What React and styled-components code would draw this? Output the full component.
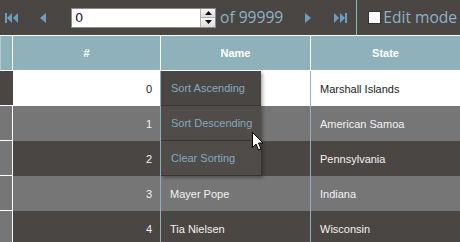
import React from "react";
import styled, { createGlobalStyle } from "styled-components";

const Global = createGlobalStyle`
  html, body { margin: 0; padding: 0; background: #ffffff; overflow: hidden; }
  * { box-sizing: border-box; }
`;

const Page = styled.div`
  position: relative;
  width: 460px;
  height: 242px;
  overflow: hidden;
  background: #4a4644;
  font-family: "Liberation Sans", Arial, sans-serif;
`;

const Toolbar = styled.div`
  display: flex;
  align-items: center;
  height: 36px;
  background: #4a4644;
  border-bottom: 1px solid #ffffff;
  white-space: nowrap;
  & > * { flex-shrink: 0; }
`;

const NavButton = styled.div`
  display: flex;
  align-items: center;
  justify-content: center;
  width: ${(p) => p.$w}px;
  margin-left: ${(p) => p.$ml || 0}px;
  height: 35px;
  color: #6f9dbd;
`;

const PageInput = styled.div`
  position: relative;
  display: flex;
  align-items: center;
  width: 145px;
  height: 20px;
  margin-left: ${(p) => p.$ml}px;
  background: #ffffff;
  border: 1px solid #8a8a8a;
  padding-left: 3px;
  font-family: "DejaVu Sans", Tahoma, sans-serif;
  font-size: 13px;
  color: #1a1a40;
`;

const Spinner = styled.div`
  position: absolute;
  right: 0;
  top: 0;
  bottom: 0;
  width: 15px;
  display: flex;
  flex-direction: column;
  border-left: 1px solid #b0b0b0;
  background: #ececec;
`;

const SpinBtn = styled.div`
  flex: 1;
  display: flex;
  align-items: center;
  justify-content: center;
  border-bottom: ${(p) => (p.$top ? "1px solid #b0b0b0" : "none")};
  background: linear-gradient(#f6f6f6, #dcdcdc);
`;

const ToolText = styled.span`
  font-family: "Open Sans", sans-serif;
  font-size: 15.6px;
  color: #8fb2c2;
  margin-left: ${(p) => p.$ml || 0}px;
  line-height: 1;
  white-space: nowrap;
`;

const Divider = styled.div`
  width: 1px;
  height: 35px;
  margin-left: ${(p) => p.$ml}px;
  background: #8fb1b9;
`;

const Check = styled.div`
  width: 13px;
  height: 13px;
  margin-left: ${(p) => p.$ml}px;
  background: #ffffff;
  border: 1px solid #333;
`;

const Grid = styled.div`
  display: grid;
  grid-template-columns: 13px 148px 150px 149px;
`;

const HeadCell = styled.div`
  height: 35px;
  display: flex;
  align-items: center;
  justify-content: center;
  background: #8fb1b9;
  border-bottom: 1px solid #ffffff;
  border-right: ${(p) => (p.$last ? "none" : "1px solid #ffffff")};
  border-left: ${(p) => (p.$first ? "1px solid #b9c9cc" : "none")};
  color: #ffffff;
  font-weight: bold;
  font-size: 11px;
`;

const Indicator = styled.div`
  height: 35px;
  background: ${(p) => p.$bg};
  border-right: ${(p) => (p.$sel ? "none" : "1px solid #ffffff")};
  border-bottom: 1px solid #ffffff;
`;

const Cell = styled.div`
  height: 35px;
  display: flex;
  align-items: center;
  justify-content: ${(p) => (p.$right ? "flex-end" : "flex-start")};
  padding: ${(p) => (p.$right ? "0 8px 0 0" : "0 0 0 9px")};
  background: ${(p) => p.$bg};
  color: ${(p) => p.$fg};
  border-right: ${(p) => (p.$last ? "none" : "1px solid #8fb1b9")};
  font-size: 11px;
  white-space: nowrap;
  overflow: hidden;
`;

const Menu = styled.div`
  position: absolute;
  left: 161px;
  top: 71px;
  width: 100px;
  background: #4a4644;
  box-shadow: 2px 2px 3px rgba(0, 0, 0, 0.3);
`;

const MenuItem = styled.div`
  height: 35px;
  display: flex;
  align-items: center;
  padding-left: 10px;
  background: ${(p) => (p.$hover ? "#4f4c4a" : "#4a4644")};
  border-bottom: 1px solid #383534;
  color: #88a8bd;
  font-size: 11px;
  white-space: nowrap;
`;

const Cursor = styled.svg`
  position: absolute;
  left: 252px;
  top: 132px;
`;

const rows = [
  { n: 0, name: "", state: "Marshall Islands" },
  { n: 1, name: "", state: "American Samoa" },
  { n: 2, name: "", state: "Pennsylvania" },
  { n: 3, name: "Mayer Pope", state: "Indiana" },
  { n: 4, name: "Tia Nielsen", state: "Wisconsin" },
];

const Tri = ({ dir }) => (
  <svg width="6" height="10" viewBox="0 0 6 10">
    {dir === "l" ? <path d="M6 0 L0 5 L6 10 Z" fill="currentColor" /> : <path d="M0 0 L6 5 L0 10 Z" fill="currentColor" />}
  </svg>
);

const First = () => (
  <svg width="13" height="10" viewBox="0 0 13 10">
    <rect x="0" y="0" width="2" height="10" fill="currentColor" />
    <path d="M7 0 L2 5 L7 10 Z" fill="currentColor" />
    <path d="M13 0 L8 5 L13 10 Z" fill="currentColor" />
  </svg>
);

const Last = () => (
  <svg width="13" height="10" viewBox="0 0 13 10">
    <path d="M0 0 L5 5 L0 10 Z" fill="currentColor" />
    <path d="M6 0 L11 5 L6 10 Z" fill="currentColor" />
    <rect x="11" y="0" width="2" height="10" fill="currentColor" />
  </svg>
);

export default function App() {
  return (
    <>
      <Global />
      <Page>
        <Toolbar>
          <NavButton $w={13} $ml={5}><First /></NavButton>
          <NavButton $w={6} $ml={22}><Tri dir="l" /></NavButton>
          <PageInput $ml={25}>
            0
            <Spinner>
              <SpinBtn $top>
                <svg width="7" height="4" viewBox="0 0 7 4"><path d="M0 4 L3.5 0 L7 4 Z" fill="#111" /></svg>
              </SpinBtn>
              <SpinBtn>
                <svg width="7" height="4" viewBox="0 0 7 4"><path d="M0 0 L3.5 4 L7 0 Z" fill="#111" /></svg>
              </SpinBtn>
            </Spinner>
          </PageInput>
          <ToolText $ml={4}>of 99999</ToolText>
          <NavButton $w={6} $ml={22}><Tri dir="r" /></NavButton>
          <NavButton $w={13} $ml={23}><Last /></NavButton>
          <Divider $ml={9} />
          <Check $ml={11} />
          <ToolText $ml={2}>Edit mode</ToolText>
        </Toolbar>
        <Grid>
          <HeadCell $first />
          <HeadCell>#</HeadCell>
          <HeadCell>Name</HeadCell>
          <HeadCell $last>State</HeadCell>
          {rows.map((r, i) => {
            const sel = i === 0;
            const bg = sel ? "#ffffff" : i % 2 === 1 ? "#767676" : "#4a4644";
            const fg = sel ? "#222222" : "#f2f2f2";
            return (
              <React.Fragment key={r.n}>
                <Indicator $bg={sel ? "#4a4644" : "#767676"} $sel={sel} />
                <Cell $right $bg={bg} $fg={fg}>{r.n}</Cell>
                <Cell $bg={bg} $fg={fg}>{r.name}</Cell>
                <Cell $last $bg={bg} $fg={fg}>{r.state}</Cell>
              </React.Fragment>
            );
          })}
        </Grid>
        <Menu>
          <MenuItem>Sort Ascending</MenuItem>
          <MenuItem $hover>Sort Descending</MenuItem>
          <MenuItem $hover>Clear Sorting</MenuItem>
        </Menu>
        <Cursor width="12" height="19" viewBox="0 0 12 19">
          <path d="M0.5 0.5 L0.5 15.5 L4 12 L6.5 18 L9 17 L6.5 11 L11 11 Z" fill="#ffffff" stroke="#000000" strokeWidth="1" strokeLinejoin="round" />
        </Cursor>
      </Page>
    </>
  );
}
